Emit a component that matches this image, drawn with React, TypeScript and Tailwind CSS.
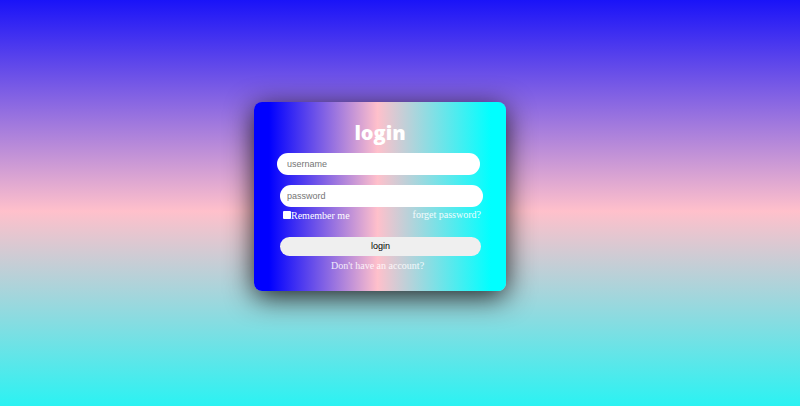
export default function App() {
  return (
    <div className="h-[406px] w-full overflow-hidden bg-[linear-gradient(to_bottom,#1a13f8,#ffc0cb_52%,#2bf2f2)] pt-[102px] pl-[254px]">
      {/* Card */}
      <div className="flex h-[189px] w-[252px] flex-col rounded-[8px] bg-[linear-gradient(to_right,#0000ff_6%,#ffc0cb_49%,#00ffff_94%)] shadow-[0_6px_28px_rgba(0,0,0,0.85)]">
        <h1 className="mt-[20px] text-center font-['Open_Sans',sans-serif] text-[20px] leading-[22px] font-extrabold text-white">
          login
        </h1>

        <input
          type="text"
          placeholder="username"
          className="mt-[9px] ml-[23px] h-[22px] w-[203px] rounded-full bg-white pl-[10px] font-['Liberation_Sans',Arial,sans-serif] text-[9px] text-black outline-none placeholder:text-[#757575]"
        />
        <input
          type="password"
          placeholder="password"
          className="mt-[10px] ml-[26px] h-[22px] w-[203px] rounded-full bg-white pl-[7px] font-['Liberation_Sans',Arial,sans-serif] text-[9px] text-black outline-none placeholder:text-[#757575]"
        />

        <div className="mt-[4px] ml-[29px] flex h-[12px] w-[198px] items-start justify-between font-['Liberation_Serif',serif] text-[10px] leading-[12px] text-white">
          <label className="flex items-start">
            <input type="checkbox" className="m-0 h-[8px] w-[8px] appearance-none rounded-[1px] bg-white" />
            <span className="-mt-[1px]">Remember me</span>
          </label>
          <span className="-mt-[2px] text-white/90">forget password?</span>
        </div>

        <button className="mt-[14px] ml-[26px] h-[19px] w-[201px] rounded-full bg-[#efefef] font-['Liberation_Sans',Arial,sans-serif] text-[9px] text-black">
          login
        </button>

        <div className="mt-[4px] ml-[23px] w-[201px] text-center font-['Liberation_Serif',serif] text-[10px] leading-[12px] text-white/85">
          Don't have an account?
        </div>
      </div>
    </div>
  );
}
